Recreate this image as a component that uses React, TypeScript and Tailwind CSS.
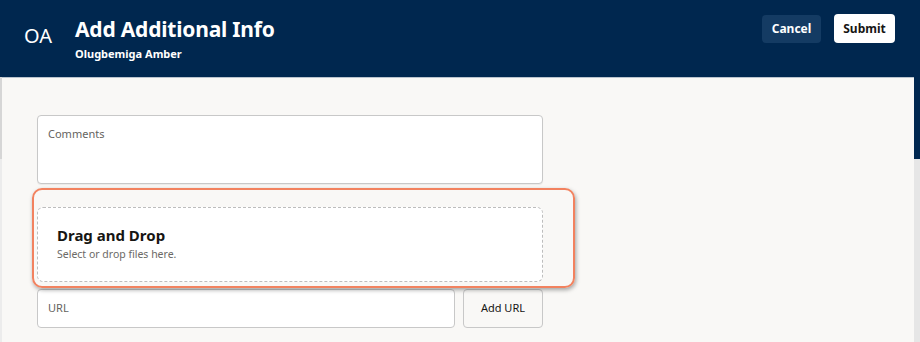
export default function App() {
  return (
    <div className="relative w-[920px] h-[342px] overflow-hidden bg-[#ececec] font-['Noto_Sans',sans-serif]">
      <header className="h-[77px] bg-[#00274f] flex items-start justify-between pl-[24px] pr-[25px]">
        <div className="flex items-start pt-[15px]">
          <span className="text-white text-[20px] leading-none mt-[11px] w-[51px]">OA</span>
          <div className="flex flex-col">
            <h1 className="text-white font-bold text-[21px] leading-[28px] tracking-[-0.2px]">Add Additional Info</h1>
            <span className="text-white font-bold text-[11px] leading-[14px] mt-[4px]">Olugbemiga Amber</span>
          </div>
        </div>
        <div className="flex items-center gap-[13px] pt-[14px]">
          <button className="h-[28px] w-[59px] rounded-[4px] bg-[#143b63] text-white text-[12px] font-bold">
            Cancel
          </button>
          <button className="h-[29px] w-[61px] rounded-[4px] bg-white text-[#161513] text-[12px] font-bold">
            Submit
          </button>
        </div>
      </header>

      <div className="flex h-[265px]">
        <div className="w-[2px] flex flex-col">
          <div className="h-[82px] bg-[#d6d6d6]" />
          <div className="flex-1 bg-[#ececec]" />
        </div>
        <main className="flex-1 bg-[#f9f8f6] border-t border-[#b9c3ce] pt-[37px] pl-[35px]">
          <div className="w-[506px] flex flex-col">
            <div className="h-[69px] bg-white border border-[#c8c8c8] rounded-[4px] shadow-[0_1px_1px_rgba(0,0,0,0.06)] px-[10px] pt-[11px]">
              <span className="block text-[11px] leading-[14px] text-[#656360]">Comments</span>
            </div>
            <div className="mt-[23px] h-[75px] bg-white border border-dashed border-[#bdbdbd] rounded-[6px] px-[19px] pt-[16px] flex flex-col">
              <span className="text-[15px] font-bold text-[#161513] leading-[22px]">Drag and Drop</span>
              <span className="text-[10.5px] text-[#6b6966] leading-[16px]">Select or drop files here.</span>
            </div>
            <div className="mt-[7px] flex gap-[8px]">
              <div className="w-[418px] h-[39px] bg-white border border-[#c8c8c8] rounded-[4px] px-[10px] flex items-center">
                <span className="text-[11px] text-[#656360]">URL</span>
              </div>
              <button className="w-[80px] h-[39px] border border-[#c8c8c8] rounded-[4px] bg-[#f9f8f6] text-[11px] text-[#161513]">
                Add URL
              </button>
            </div>
          </div>
        </main>
        <div className="w-[6px] flex flex-col">
          <div className="h-[82px] bg-[#00274f]" />
          <div className="flex-1 bg-[#e6e6e6]" />
        </div>
      </div>

      <div className="absolute left-[32px] top-[188px] w-[543px] h-[100px] rounded-[10px] border-[2px] border-[#f2825f] shadow-[1px_2px_4px_rgba(0,0,0,0.35)] pointer-events-none" />
    </div>
  );
}
